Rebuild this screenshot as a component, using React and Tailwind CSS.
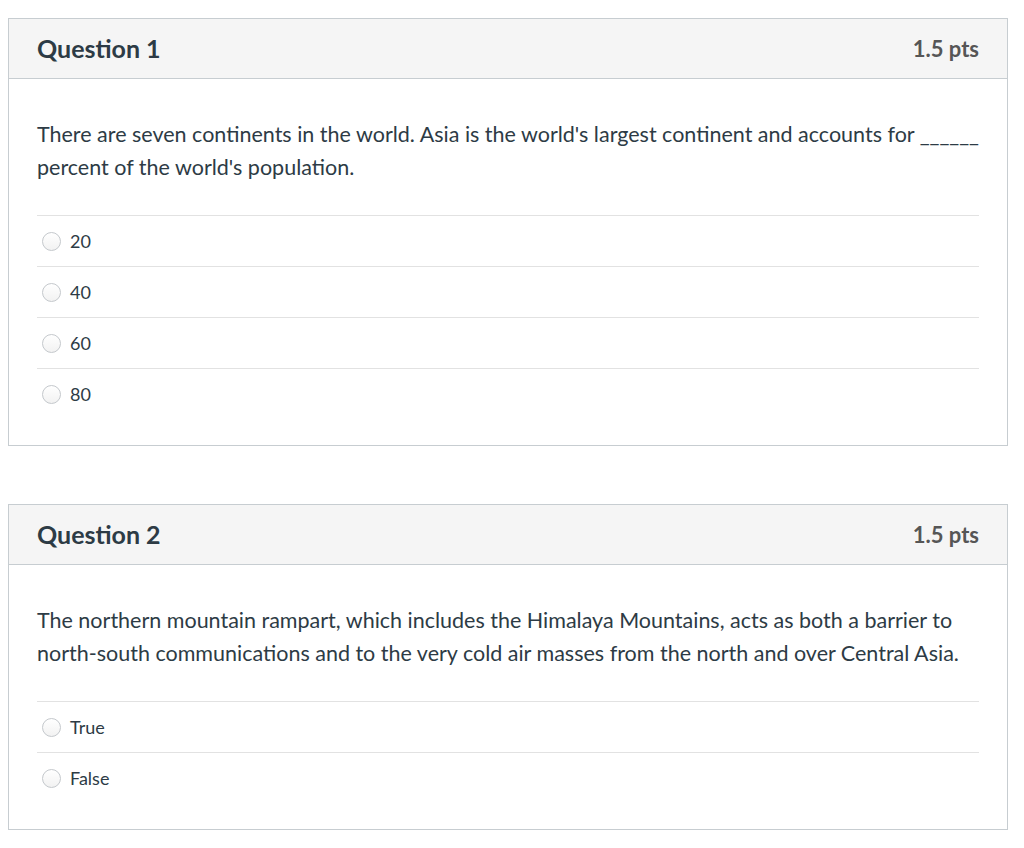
import React from "react";

const questions = [
  {
    title: "Question 1",
    pts: "1.5 pts",
    text: "There are seven continents in the world. Asia is the world's largest continent and accounts for ______ percent of the world's population.",
    answers: ["20", "40", "60", "80"],
  },
  {
    title: "Question 2",
    pts: "1.5 pts",
    text: "The northern mountain rampart, which includes the Himalaya Mountains, acts as both a barrier to north-south communications and to the very cold air masses from the north and over Central Asia.",
    answers: ["True", "False"],
  },
];

const Radio = () => (
  <span className="w-[19px] h-[19px] rounded-full border border-[#c4c8cc] bg-gradient-to-b from-white to-[#f2f2f2] shrink-0" />
);

const QuestionCard = ({ q }) => {
  return (
    <div className="border border-[#c7cdd1] bg-white">
      <div className="flex items-center justify-between h-[60px] px-[28px] bg-[#f5f5f5] border-b border-[#c7cdd1]">
        <h2 className="text-[25px] font-bold text-[#2d3b45]">{q.title}</h2>
        <div className="text-[22px] font-bold text-[#565656]">{q.pts}</div>
      </div>
      <div className="px-[28px] pt-[39px] pb-[26px]">
        <p className="text-[21.5px] leading-[32.5px] text-[#2d3b45]">{q.text}</p>
        <div className="mt-[32px]">
          {q.answers.map((a) => (
            <div
              key={a}
              className="flex items-center gap-[9px] h-[51px] pl-[5px] border-t border-[#e2e2e2]"
            >
              <Radio />
              <span className="text-[18px] text-[#2d3b45]">{a}</span>
            </div>
          ))}
        </div>
      </div>
    </div>
  );
};

const App = () => {
  return (
    <div
      className="min-h-screen bg-white pt-[18px] px-[8px] flex flex-col gap-[58px] w-[1016px]"
      style={{ fontFamily: "Lato, 'Liberation Sans', sans-serif" }}
    >
      {questions.map((q) => (
        <QuestionCard key={q.title} q={q} />
      ))}
    </div>
  );
};

export default App;
